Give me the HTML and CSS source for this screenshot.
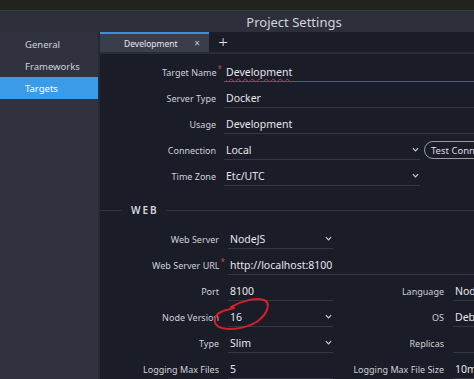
FILE: index.html
```html
<!DOCTYPE html>
<html lang="en">
<head>
  <meta charset="UTF-8">
  <meta name="viewport" content="width=device-width, initial-scale=1.0">
  <title>Project Settings</title>
  <link rel="stylesheet" href="styles.css">
</head>
<body>
  <div class="topstrip"></div>
  <div class="titlebar">Project Settings</div>
  <div class="main">
    <div class="sidebar">
      <div class="nav-item">General</div>
      <div class="nav-item">Frameworks</div>
      <div class="nav-item active">Targets</div>
    </div>
    <div class="content">
      <div class="tabbar">
        <div class="tab">Development <span class="tab-close">&#215;</span></div>
        <div class="tab-add">+</div>
      </div>

      <div class="form">
        <div class="label">Target Name<span class="req">*</span></div>
        <div class="field wide focused"><span class="typo">Development</span></div>

        <div class="label">Server Type</div>
        <div class="field wide">Docker</div>

        <div class="label">Usage</div>
        <div class="field wide">Development</div>

        <div class="label">Connection</div>
        <div class="value-row">
          <div class="field select">Local <svg class="chev" viewBox="0 0 8 5"><path d="M1 1l3 3 3-3"/></svg></div>
          <button class="test-btn">Test Connection</button>
        </div>

        <div class="label">Time Zone</div>
        <div class="field select">Etc/UTC <svg class="chev" viewBox="0 0 8 5"><path d="M1 1l3 3 3-3"/></svg></div>
      </div>

      <div class="section-head">
        <span class="line short"></span>
        <span class="section-title">WEB</span>
        <span class="line"></span>
      </div>

      <div class="web-form">
        <div class="label">Web Server</div>
        <div class="field select">NodeJS <svg class="chev" viewBox="0 0 8 5"><path d="M1 1l3 3 3-3"/></svg></div>
        <div></div>
        <div></div>

        <div class="label">Web Server URL<span class="req">*</span></div>
        <div class="field span3">http://localhost:8100</div>

        <div class="label">Port</div>
        <div class="field">8100</div>
        <div class="label">Language</div>
        <div class="field right">NodeJS</div>

        <div class="label">Node Version</div>
        <div class="field select">16 <svg class="chev" viewBox="0 0 8 5"><path d="M1 1l3 3 3-3"/></svg></div>
        <div class="label">OS</div>
        <div class="field right">Debian</div>

        <div class="label">Type</div>
        <div class="field select">Slim <svg class="chev" viewBox="0 0 8 5"><path d="M1 1l3 3 3-3"/></svg></div>
        <div class="label">Replicas</div>
        <div class="field right"></div>

        <div class="label">Logging Max Files</div>
        <div class="field">5</div>
        <div class="label">Logging Max File Size</div>
        <div class="field right">10m</div>
      </div>
    </div>
  </div>

  <!-- hand-drawn annotation around the node version -->
  <svg class="scribble" width="474" height="379" viewBox="0 0 474 379">
    <path d="M231 307 C242 301 256 297 264 300 C271 303 268 313 258 321 C249 327 233 331 222 328 C212 325 213 316 221 312 C225 310 230 309 234 308"/>
  </svg>
</body>
</html>
```

FILE: styles.css
```css
body {
  margin: 0;
  width: 474px;
  height: 379px;
  overflow: hidden;
  background-color: #1a1c27;
  font-family: "Noto Sans", "Open Sans", sans-serif;
  color: #d6d7dc;
  position: relative;
}
.topstrip {
  height: 10px;
  background-color: #22231f;
  border-bottom: 1px solid #3a3b3d;
}
.titlebar {
  height: 21px;
  background-color: #2d303b;
  display: flex;
  align-items: center;
  justify-content: center;
  padding-left: 114px;
  font-size: 13px;
  color: #d2d4da;
}
.main {
  display: flex;
  height: 347px;
}
.sidebar {
  width: 100px;
  flex-shrink: 0;
  background-color: #30333f;
  border-right: 2px solid #272a35;
  box-sizing: border-box;
  padding-top: 1px;
}
.nav-item {
  height: 22px;
  display: flex;
  align-items: center;
  padding-left: 25px;
  font-size: 9.5px;
  color: #cfd2da;
}
.nav-item.active {
  background-color: #3c9be8;
  color: #ffffff;
}
.content {
  flex: 1;
  overflow: hidden;
}
.tabbar {
  display: flex;
  height: 20px;
  border-bottom: 2px solid #2a2d38;
}
.tab {
  width: 109px;
  background-color: #3a3d4a;
  border-top: 2px solid #3b8fe0;
  box-sizing: border-box;
  display: flex;
  align-items: center;
  padding-left: 24px;
  font-size: 8.5px;
  color: #e8e9ee;
  position: relative;
}
.tab-close {
  position: absolute;
  right: 9px;
  font-size: 10px;
  color: #c8cad0;
}
.tab-add {
  width: 28px;
  height: 20px;
  display: flex;
  align-items: center;
  justify-content: center;
  font-size: 17px;
  font-weight: 300;
  line-height: 20px;
  color: #e0e0e4;
}
.form {
  display: grid;
  grid-template-columns: 116px 1fr;
  column-gap: 8px;
  row-gap: 6px;
  padding-top: 8px;
}
.label {
  height: 20px;
  display: flex;
  align-items: center;
  justify-content: flex-end;
  font-size: 9px;
  color: #cfd1d7;
  white-space: nowrap;
}
.req {
  color: #d0404a;
  font-size: 8px;
  margin-right: -6px;
  margin-left: 1px;
  align-self: flex-start;
  margin-top: 1px;
}
.field {
  height: 20px;
  box-sizing: border-box;
  border-bottom: 1px solid #343743;
  display: flex;
  align-items: center;
  padding-left: 2px;
  font-size: 10.5px;
  color: #e6e7ea;
  white-space: nowrap;
  position: relative;
}
.field.wide {
  width: 300px;
}
.field.focused {
  border-bottom-color: #3e5f93;
}
.typo {
  text-decoration: underline wavy #c0303f;
  text-decoration-thickness: 1px;
  text-underline-offset: 2px;
}
.field.select {
  width: 196px;
  justify-content: space-between;
  padding-right: 1px;
}
.chev {
  width: 7px;
  height: 5px;
  fill: none;
  stroke: #c9cbd2;
  stroke-width: 1.4;
}
.value-row {
  display: flex;
  align-items: center;
  gap: 4px;
}
.test-btn {
  height: 18px;
  border: 1px solid #9a9ca4;
  border-radius: 9px;
  background: transparent;
  color: #dcdde2;
  font-family: inherit;
  font-size: 9.5px;
  padding: 0 6px;
  white-space: nowrap;
}
.section-head {
  display: flex;
  align-items: center;
  margin-top: 18px;
  height: 12px;
}
.line {
  flex: 1;
  height: 1px;
  background-color: #33363f;
}
.line.short {
  flex: 0 0 22px;
}
.section-title {
  margin: 0 7px 0 9px;
  font-size: 10px;
  font-weight: 600;
  letter-spacing: 2px;
  color: #d4d6dc;
}
.web-form {
  display: grid;
  grid-template-columns: 119px 114px 111px 1fr;
  row-gap: 6px;
  margin-top: 13px;
}
.web-form .field {
  margin-left: 9px;
}
.web-form .field.select {
  width: auto;
}
.web-form .span3 {
  grid-column: span 3;
}
.web-form .right {
  width: 60px;
}
.scribble {
  position: absolute;
  left: 0;
  top: 0;
  pointer-events: none;
}
.scribble path {
  fill: none;
  stroke: #d42029;
  stroke-width: 2;
  stroke-linecap: round;
}
```
